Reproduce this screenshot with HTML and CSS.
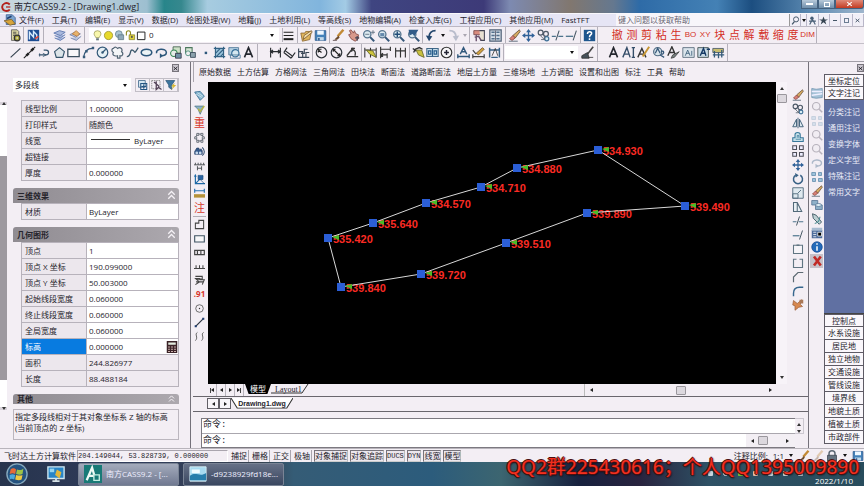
FILE: index.html
```html
<!DOCTYPE html>
<html lang="zh-CN">
<head>
<meta charset="utf-8">
<title>南方CASS9.2 - [Drawing1.dwg]</title>
<link rel="stylesheet" href="styles.css">
</head>
<body>
<svg class="sprite" aria-hidden="true">
  <symbol id="gear" viewBox="0 0 16 16"><path d="M3 1h7l2 2v11H3z" fill="#d9d4a0" stroke="#555"/><path d="M5 4h4M5 6h4M5 8h2" stroke="#444"/><circle cx="10" cy="11" r="3.5" fill="#a9a53a" stroke="#333" stroke-width="1.5"/><circle cx="10" cy="11" r="1" fill="#fff"/></symbol>
  <symbol id="cass" viewBox="0 0 16 16"><path d="M1 1h14v14H1z" fill="#1d4d92"/><path d="M3 13V4l5 6V3l4 4v6" fill="none" stroke="#d6ecff" stroke-width="1.7"/><path d="M10 12l4-3" stroke="#e24a3a" stroke-width="2"/></symbol>
  <symbol id="layers" viewBox="0 0 16 16"><path d="M1 5l7-3 7 2-6 4zM2 8l7 3 6-4M2 11l7 3 6-4" fill="#a9b9dd" stroke="#667eb4" stroke-width="1.2"/></symbol>
  <symbol id="layers2" viewBox="0 0 16 16"><path d="M1 7l6-3 7 2-6 4zM2 11l7 3 6-5" fill="#b9c4dd" stroke="#7180a7"/><path d="M4 6l5-4 4 4-3 3z" fill="#e7b36b" stroke="#b7773a"/></symbol>
  <symbol id="bulb" viewBox="0 0 16 16"><path d="M5.500 11C5 9 3 8 3 5.500a5 4.500 0 0 1 10 0C13 8 11 9 10.500 11z" fill="#f8f7ac" stroke="#908f4a"/><path d="M6 12h4v3H6z" fill="#69767c"/></symbol>
  <symbol id="sun" viewBox="0 0 16 16"><circle cx="8" cy="8" r="6" fill="#e7d92d" stroke="#8f8620"/></symbol>
  <symbol id="vpsun" viewBox="0 0 16 16"><circle cx="7" cy="6" r="5" fill="#a9c3d2" stroke="#557485"/><path d="M6 7h8v7H6z" fill="#8fa9b9" stroke="#54707e"/></symbol>
  <symbol id="lock" viewBox="0 0 16 16"><path d="M2 8V4a3 3 0 0 1 6 0v4" fill="none" stroke="#8f8b24" stroke-width="1.600"/><path d="M6 7h8v7H6z" fill="#ddd23c" stroke="#827b22"/><circle cx="10" cy="10" r="1.500" fill="#555"/></symbol>
  <symbol id="swatch" viewBox="0 0 16 16"><path d="M2 3h11v11H2z" fill="#fff" stroke="#222" stroke-width="1.400"/></symbol>
  <symbol id="weights" viewBox="0 0 16 16"><path d="M2 4h12M2 8h12" stroke="#222" stroke-width="1.500"/><path d="M2 12.500h12" stroke="#222" stroke-width="2.500"/></symbol>
  <symbol id="folder" viewBox="0 0 16 16"><path d="M1 5h5l1-2h7l-2 10-9 2z" fill="#e2b65e" stroke="#8a6630"/><path d="M4 13l1-5 9-6 1 2z" fill="#f4deae" stroke="#795b32"/></symbol>
  <symbol id="save" viewBox="0 0 16 16"><path d="M1.500 2h13v12h-13z" fill="#4381b9" stroke="#315d8f"/><path d="M4 2h8v5H4z" fill="#eef7ff"/><path d="M4 10h8v4H4z" fill="#c2d8e9"/><path d="M6 11v3" stroke="#315d8f" stroke-width="2"/></symbol>
  <symbol id="brush" viewBox="0 0 16 16"><path d="M14 1L7 9" stroke="#c28a35" stroke-width="3"/><path d="M8 8l-5 5c2 1 5 0 6-3z" fill="#6d4a2b"/><path d="M1 14h5" stroke="#544" /></symbol>
  <symbol id="hand" viewBox="0 0 16 16"><path d="M2 7l3-1-2-4 2-1 3 4 1-3 2 4 3 1v5l-4 3-5-3z" fill="#d9998b" stroke="#80443f"/><path d="M10 11h5M12.500 8.500v6" stroke="#445" stroke-width="1.500"/></symbol>
  <symbol id="zoom" viewBox="0 0 16 16"><circle cx="6.500" cy="6.500" r="4.500" fill="#dceaf1" stroke="#587690" stroke-width="1.600"/><path d="M10 10l5 5" stroke="#355779" stroke-width="2.500"/></symbol>
  <symbol id="zoompm" viewBox="0 0 16 16"><use href="#zoom"/><path d="M11 4h5M13.500 1.500v5M4 6.500h5" stroke="#567"/></symbol>
  <symbol id="zoomwin" viewBox="0 0 16 16"><use href="#zoom"/><path d="M4 5h5v4H4z" fill="#6388ab"/></symbol>
  <symbol id="zoomplus" viewBox="0 0 16 16"><use href="#zoom"/><path d="M3 6.500h7M6.500 3v7" stroke="#234d78" stroke-width="1.700"/></symbol>
  <symbol id="zoomprev" viewBox="0 0 16 16"><use href="#zoom"/><path d="M2 1h12l-5 8-2-3-4 2z" fill="#315b88"/></symbol>
  <symbol id="undo" viewBox="0 0 16 16"><path d="M13 2C8 2 5 5 5 10" fill="none" stroke="#24466d" stroke-width="2.200"/><path d="M1 8l8 1-4 6z" fill="#24466d"/></symbol>
  <symbol id="redo" viewBox="0 0 16 16"><path d="M3 2c5 0 8 3 8 8" fill="none" stroke="#b9bdcc" stroke-width="2.200"/><path d="M15 8l-8 1 4 6z" fill="#b9bdcc"/></symbol>
  <symbol id="props" viewBox="0 0 16 16"><path d="M1 2h9v5H1z" fill="#d98d80" stroke="#744"/><path d="M8 2h6v12h-5" fill="#e8e0d2" stroke="#445" stroke-width="1.300"/><path d="M4 7v8M2 10l5-1 3 5" stroke="#6a526d" stroke-width="1.700" fill="none"/></symbol>
  <symbol id="palette" viewBox="0 0 16 16"><path d="M1 1h14v14H1z" fill="#d6dfe8" stroke="#506277" stroke-width="1.500"/><path d="M3 4h4M9 4h4M3 8h4M9 8h4M3 12h4M9 12h4" stroke="#53708c" stroke-width="2"/><path d="M8 2v12" stroke="#556"/></symbol>
  <symbol id="eraser" viewBox="0 0 16 16"><path d="M14 1l-8 7 3 3 6-8z" fill="#d7aa60" stroke="#66513d"/><path d="M6 8l-4 4 3 2 4-3z" fill="#d88074" stroke="#844"/><path d="M1 15h11" stroke="#456"/></symbol>
  <symbol id="move" viewBox="0 0 16 16"><path d="M8 2v12M2 8h12" stroke="#316299" stroke-width="1.700"/><path d="M8 0l3 4H5zM8 16l3-4H5zM0 8l4-3v6zM16 8l-4-3v6z" fill="#316299"/></symbol>
  <symbol id="copy" viewBox="0 0 16 16"><circle cx="4.500" cy="4.500" r="3" fill="none" stroke="#4d5967" stroke-width="1.500"/><circle cx="11" cy="6" r="3" fill="none" stroke="#4d5967" stroke-width="1.500"/><circle cx="12" cy="12" r="2.500" fill="#d8edf4" stroke="#407198" stroke-width="1.500"/><path d="M4 8l5 5M5 13h4V9" fill="none" stroke="#4d5967"/></symbol>
  <symbol id="trim" viewBox="0 0 16 16"><path d="M1 9h5M9 9h6" stroke="#4d748c" stroke-width="1.600"/><path d="M10 2L6 14" stroke="#455663" stroke-width="1.300"/></symbol>
  <symbol id="extend" viewBox="0 0 16 16"><path d="M1 9h9" stroke="#4d748c" stroke-width="1.600"/><path d="M14 2l-4 12" stroke="#455663" stroke-width="1.300"/></symbol>
  <symbol id="help" viewBox="0 0 16 16"><path d="M1 1h14v14H1z" fill="#1e568e"/><path d="M5.500 6c0-4 6-3 5 0-.5 1.500-2.500 1.500-2.500 4M8 11.500v2" fill="none" stroke="#fff" stroke-width="1.900"/></symbol>
  <symbol id="line" viewBox="0 0 16 16"><path d="M2 14L14 3" stroke="#34414e" stroke-width="1.400"/></symbol>
  <symbol id="xline" viewBox="0 0 16 16"><path d="M1 15L15 1" stroke="#222" stroke-width="1.400"/><path d="M4 12l3-3M10 6l3-3" stroke="#222" stroke-width="3"/></symbol>
  <symbol id="pline" viewBox="0 0 16 16"><path d="M1 11h9a3 3 0 0 0 0-6H7" fill="none" stroke="#35536d" stroke-width="1.500"/><path d="M2 9v4M6 9l4 2-4 2" stroke="#35536d" fill="none"/></symbol>
  <symbol id="pentagon" viewBox="0 0 16 16"><path d="M8 2l6 5-2 7H4L2 7z" fill="#dce4e8" stroke="#34536b" stroke-width="1.400"/></symbol>
  <symbol id="rect" viewBox="0 0 16 16"><path d="M1 4h14v9H1z" fill="#f8f7f9" stroke="#3c5060" stroke-width="1.600"/></symbol>
  <symbol id="arc" viewBox="0 0 16 16"><path d="M2 14C3 7 7 3 13 3" fill="none" stroke="#355a79" stroke-width="1.600"/><path d="M1 12h3v3H1zM12 1h3v3h-3zM4 5h3v3H4z" fill="#355a79"/></symbol>
  <symbol id="circle" viewBox="0 0 16 16"><circle cx="8" cy="8" r="6.500" fill="#e7f0f5" stroke="#355a79" stroke-width="1.500"/><path d="M8 8l4-4" stroke="#355a79" stroke-width="1.600"/><circle cx="8" cy="8" r="1.500" fill="#355a79"/></symbol>
  <symbol id="cloud" viewBox="0 0 16 16"><path d="M3 3c2-3 4-1 5 0 3-2 7 0 5 4 3 2 1 6-2 5v3H8v-3c-4 1-7-1-5-4C0 6 1 3 3 3z" fill="#f4f5f7" stroke="#536474" stroke-width="1.500"/></symbol>
  <symbol id="spline" viewBox="0 0 16 16"><path d="M1 13C7 13 4 4 8 5s1 7 7-3" fill="none" stroke="#3e596d" stroke-width="1.600"/></symbol>
  <symbol id="ellipse" viewBox="0 0 16 16"><ellipse cx="8" cy="8" rx="6.500" ry="4" fill="#eef4f6" stroke="#2d577b" stroke-width="1.900"/></symbol>
  <symbol id="ellarc" viewBox="0 0 16 16"><path d="M2 9c-2-6 12-7 12-1 0 3-3 4-6 4" fill="none" stroke="#2d577b" stroke-width="1.900"/><path d="M6 9v6l4-3z" fill="#2d577b"/></symbol>
  <symbol id="insert" viewBox="0 0 16 16"><path d="M5 1h9v8H5z" fill="#cee1c7" stroke="#3c5c48"/><circle cx="6" cy="9" r="4" fill="#e6ede8" stroke="#385" stroke-width="1.300"/><path d="M8 9h7v6H8z" fill="#6f90a5" stroke="#334"/></symbol>
  <symbol id="block" viewBox="0 0 16 16"><path d="M2 2h8v7H2z" fill="#d7e6d5" stroke="#4c775d" stroke-width="1.300"/><circle cx="5" cy="9" r="3" fill="#eee" stroke="#487"/><path d="M8 8h6v6H8z" fill="#8ba1ac" stroke="#345"/></symbol>
  <symbol id="dot" viewBox="0 0 16 16"><path d="M7 7h3v3H7z" fill="#2d577b"/></symbol>
  <symbol id="hatch" viewBox="0 0 16 16"><path d="M3 3h10v10H3z" fill="#9bc4dc"/><path d="M1 3h14M1 13h14M3 1v14M13 1v14M3 9l6-6M4 13l9-9M9 13l4-4" stroke="#336284" stroke-width="1.400"/></symbol>
  <symbol id="region" viewBox="0 0 16 16"><path d="M1 2h12v9H1z" fill="#b4d0e1" stroke="#477392"/><circle cx="9" cy="9" r="4.500" fill="#d4e7f0" stroke="#387099" stroke-width="1.500"/><path d="M3 11h12v4H3z" fill="none" stroke="#477392"/></symbol>
  <symbol id="dimlin" viewBox="0 0 16 16"><path d="M2 2v12M14 2v12M2 7h12M5 5L2 7l3 2M11 5l3 2-3 2" stroke="#292c30" stroke-width="1.400" fill="none"/></symbol>
  <symbol id="dimali" viewBox="0 0 16 16"><path d="M1 8l9 7M5 2l-4 6M15 8l-5 7M3 6l8 6" stroke="#292c30" stroke-width="1.500"/></symbol>
  <symbol id="dimord" viewBox="0 0 16 16"><path d="M2 3v11h13M5 9h4V4h4M11 14V8h4M2 7h5v7" stroke="#394656" stroke-width="1.400" fill="none"/></symbol>
  <symbol id="radius" viewBox="0 0 16 16"><circle cx="8" cy="8" r="6.500" fill="none" stroke="#30353c" stroke-width="1.500"/><path d="M8 8L3 4M4 8V4h4" stroke="#222" fill="none" stroke-width="1.400"/></symbol>
  <symbol id="diam" viewBox="0 0 16 16"><circle cx="8" cy="8" r="6.500" fill="none" stroke="#30353c" stroke-width="1.500"/><path d="M4 4l8 8M4 7V4h3M12 9v3H9" stroke="#222" fill="none" stroke-width="1.400"/></symbol>
  <symbol id="angle" viewBox="0 0 16 16"><path d="M1 12L9 2M1 13h14M7 4c5 1 5 5 4 8M7 7V3h4" stroke="#333" fill="none" stroke-width="1.600"/></symbol>
  <symbol id="qdim" viewBox="0 0 16 16"><path d="M1 2v12M8 2v12M15 2v12M1 5h14" stroke="#333" stroke-width="1.300"/><path d="M3 5l8 1 4 8-8-4z" fill="#cfc53e" stroke="#606022"/></symbol>
  <symbol id="dimbase" viewBox="0 0 16 16"><path d="M2 1v14M14 1v5M2 4h12M10 9v6M2 11h8M5 9l-3 2 3 2" stroke="#333" stroke-width="1.400" fill="none"/></symbol>
  <symbol id="dimcont" viewBox="0 0 16 16"><path d="M2 2v12M8 2v12M14 2v12M2 6h12" stroke="#333" stroke-width="1.400"/></symbol>
  <symbol id="qlead" viewBox="0 0 16 16"><path d="M1 3l4 3M2 8l2-4 5-2 4 2" fill="none" stroke="#333" stroke-width="1.700"/><path d="M5 5l7 0 3 9-7-3z" fill="#c9c13e" stroke="#62612a"/></symbol>
  <symbol id="tol" viewBox="0 0 16 16"><path d="M1 3h14v10H1z" fill="#c7ddeb" stroke="#426887" stroke-width="1.300"/><path d="M8 3v10M3 6h3v4H3zM10 6h3v4h-3z" stroke="#285c8b" fill="none" stroke-width="1.400"/></symbol>
  <symbol id="center" viewBox="0 0 16 16"><circle cx="8" cy="8" r="6.500" fill="#f7f5f8" stroke="#333" stroke-width="1.400"/><path d="M8 5v6M5 8h6" stroke="#223" stroke-width="1.800"/></symbol>
  <symbol id="dimtext" viewBox="0 0 16 16"><path d="M4 10l4-8 4 8M5 7h6M1 10v5M15 10v5M1 13h14" fill="none" stroke="#31587c" stroke-width="1.700"/></symbol>
  <symbol id="dimedit" viewBox="0 0 16 16"><path d="M5 9l8-7 2 2-7 7z" fill="#d0a03c" stroke="#6d522d"/><path d="M1 5l4 5M1 10v5M15 10v5M1 13h14" stroke="#444" stroke-width="1.500"/></symbol>
  <symbol id="dimupd" viewBox="0 0 16 16"><path d="M2 2v12M14 2v12M2 5h12M4 14h8" stroke="#365f83" stroke-width="1.800"/><path d="M5 12L9 3l3 9" fill="none" stroke="#333"/></symbol>
  <symbol id="dimstyle" viewBox="0 0 16 16"><path d="M15 1L8 10" stroke="#444" stroke-width="2"/><path d="M8 8l-7 4v3h9zM9 14h6" fill="#47525a" stroke="#333"/></symbol>
  <symbol id="textA" viewBox="0 0 16 16"><path d="M3 14L8 2l5 12M5 10h6" fill="none" stroke="#25282f" stroke-width="2"/></symbol>
  <symbol id="textI" viewBox="0 0 16 16"><path d="M1 14L6 2l4 12M3 10h6M12 2h4M12 14h4M14 2v12" fill="none" stroke="#344d68" stroke-width="1.700"/></symbol>
  <symbol id="textedit" viewBox="0 0 16 16"><path d="M1 14L6 3l5 11M3 10h6" fill="none" stroke="#333" stroke-width="1.700"/><path d="M15 1L7 13" stroke="#c69531" stroke-width="2.400"/></symbol>
  <symbol id="find" viewBox="0 0 16 16"><circle cx="7" cy="7" r="5" fill="#d9e4eb" stroke="#536d84" stroke-width="1.500"/><path d="M10 11l5 3M4 9l3-6 3 6M11 7c4-3 5 4 0 3" stroke="#365879" stroke-width="1.500" fill="none"/></symbol>
  <symbol id="textsty" viewBox="0 0 16 16"><path d="M1 12L6 1l4 9M3 8h6" stroke="#333" stroke-width="1.700" fill="none"/><path d="M15 7l-6 7-4 1 2-4z" fill="#76807f" stroke="#444"/></symbol>
  <symbol id="boxAI" viewBox="0 0 16 16"><path d="M1 2h14v12H1z" fill="#dae4eb" stroke="#4f6274"/><path d="M4 12l3-7 3 7M5 9h4M12 6v6" fill="none" stroke="#385a75"/></symbol>
  <symbol id="boxA" viewBox="0 0 16 16"><path d="M1 2h13v12H1z" fill="#cadbe5" stroke="#344"/><path d="M4 12l4-9 3 9M5 9h5M12 4h4" fill="none" stroke="#163a65" stroke-width="1.700"/></symbol>
  <symbol id="dimscale" viewBox="0 0 16 16"><path d="M1 3h13v5H1z" fill="#c7bd70" stroke="#456"/><path d="M3 6v8M12 5v9M1 11h14M8 8v7" stroke="#345b7a" stroke-width="1.600"/></symbol>
  <symbol id="tag" viewBox="0 0 16 16"><path d="M1 3l8-1 6 7-6 6z" fill="#86b5cf" stroke="#3d7195" stroke-width="1.300"/><path d="M3 6l9 5M5 4l8 5" stroke="#e4f0f5"/></symbol>
  <symbol id="tagedit" viewBox="0 0 16 16"><path d="M1 3h13L9 15 6 8z" fill="#8db3c4" stroke="#486f84"/><path d="M15 3l-6 8-3-4" fill="none" stroke="#b5b348" stroke-width="2.200"/></symbol>
  <symbol id="nodes" viewBox="0 0 16 16"><path d="M5 3h6l3 5-3 5H5L2 8z" fill="none" stroke="#606872" stroke-width="1.200"/><path d="M4 2h3v3H4zM10 2h3v3h-3zM1 7h3v3H1zM12 7h3v3h-3zM4 12h3v3H4zM10 12h3v3h-3z" fill="#eceaf0" stroke="#434b56"/></symbol>
  <symbol id="binoc" viewBox="0 0 16 16"><path d="M1 12V8l3-5h3l1 3 2-2 2 3v5z" fill="#35598b" stroke="#263f65"/><circle cx="4" cy="10" r="2" fill="#c7d9eb"/><circle cx="9" cy="10" r="2" fill="#c7d9eb"/><path d="M12 2c4 4 4 9 0 12" stroke="#334e72" fill="none" stroke-width="1.500"/></symbol>
  <symbol id="fence" viewBox="0 0 16 16"><path d="M0 7h16M2 4v3M6 4v3M10 4v3M14 4v3M5 9v6M11 9v6M5 12h6" stroke="#4d5054" stroke-width="1.400"/></symbol>
  <symbol id="axes" viewBox="0 0 16 16"><path d="M2 15V1M2 14h14M2 14L13 3" stroke="#1d69a6" stroke-width="1.700"/><path d="M6 2h7v6H6zM9 8l6 6" fill="#2a63a3" stroke="#184b7b"/><path d="M0 4l2-4 2 4z" fill="#1d69a6"/></symbol>
  <symbol id="ruler" viewBox="0 0 16 16"><path d="M1 4h14M1 1v6M15 1v6" stroke="#2771b2" stroke-width="1.700"/><path d="M0 9h16v5H0z" fill="#b49139"/></symbol>
  <symbol id="poly" viewBox="0 0 16 16"><path d="M2 14V6h5V2h7v12z" fill="none" stroke="#444" stroke-width="1.500"/></symbol>
  <symbol id="bars" viewBox="0 0 16 16"><path d="M1 5h14v6H1zM5 5v6M10 5v6" fill="none" stroke="#444" stroke-width="1.700"/></symbol>
  <symbol id="comb" viewBox="0 0 16 16"><path d="M0 11h16M3 11V6M8 11V6M13 11V6" stroke="#444" stroke-width="1.500"/></symbol>
  <symbol id="slope" viewBox="0 0 16 16"><path d="M2 2h10v4H3l5 4-6 4M8 7h7l-3 7M1 5h8M3 10h11" fill="none" stroke="#444" stroke-width="1.500"/></symbol>
  <symbol id="point" viewBox="0 0 16 16"><circle cx="8" cy="8" r="5.500" fill="none" stroke="#555" stroke-width="1.200"/><circle cx="8" cy="8" r="1" fill="#333"/></symbol>
  <symbol id="segment" viewBox="0 0 16 16"><path d="M2 14L14 2" stroke="#2b3440" stroke-width="1.700"/><path d="M1 12h3v3H1zM12 1h3v3h-3z" fill="#1e3c70"/></symbol>
  <symbol id="waves" viewBox="0 0 16 16"><path d="M5 2C0 5 7 9 2 14M14 2c-5 3 2 7-3 12" fill="none" stroke="#555" stroke-width="1.300"/></symbol>
  <symbol id="mirror" viewBox="0 0 16 16"><path d="M6 3v10H1zM10 3v10h5zM8 1v14" fill="#dce8ef" stroke="#45647c" stroke-width="1.300"/></symbol>
  <symbol id="offset" viewBox="0 0 16 16"><path d="M1 14V9h3V5c0-4 7-4 7 0v4h4v5z" fill="#c5dfe8" stroke="#37779a" stroke-width="1.400"/><path d="M5 11h7M7 9V6h2v3" fill="none" stroke="#37779a"/></symbol>
  <symbol id="array" viewBox="0 0 16 16"><path d="M1 1h5v5H1zM10 1h5v5h-5zM1 10h5v5H1zM10 10h5v5h-5z" fill="#eef" stroke="#4d4e58" stroke-width="1.400"/></symbol>
  <symbol id="rotate" viewBox="0 0 16 16"><path d="M11 3a6 6 0 1 1-6 0" fill="none" stroke="#3a6286" stroke-width="2"/><path d="M4 0l5 3-4 3z" fill="#3a6286"/></symbol>
  <symbol id="scale" viewBox="0 0 16 16"><path d="M1 1h14v14H1zM1 9h7v6H1zM8 8l4-4" fill="#dfe9ef" stroke="#5c7385" stroke-width="1.300"/></symbol>
  <symbol id="stretch" viewBox="0 0 16 16"><path d="M2 2h5l6 12H2zM7 2v12" fill="#eaf0f4" stroke="#526979" stroke-width="1.400"/></symbol>
  <symbol id="breakpt" viewBox="0 0 16 16"><path d="M2 3h12v11H2z" fill="#f6f4f8" stroke="#607582" stroke-width="1.400"/><path d="M6 2h4v2H6z" fill="#607582"/></symbol>
  <symbol id="break" viewBox="0 0 16 16"><path d="M6 3H2v11h12V3h-4" fill="none" stroke="#607582" stroke-width="1.500"/></symbol>
  <symbol id="chamfer" viewBox="0 0 16 16"><path d="M2 15V8l6-6h7" fill="none" stroke="#5c6972" stroke-width="1.600"/></symbol>
  <symbol id="fillet" viewBox="0 0 16 16"><path d="M2 15V11c0-5 3-8 8-8h5" fill="none" stroke="#35668d" stroke-width="1.900"/></symbol>
  <symbol id="explode" viewBox="0 0 16 16"><path d="M2 2l5 4 6-5-2 6 3 3-5 1-5 4V9L1 8z" fill="#d88950" stroke="#9b603d"/><path d="M10 1h5v5h-5z" fill="#a87756"/></symbol>
  <symbol id="zoomgray" viewBox="0 0 16 16"><circle cx="7" cy="7" r="5" fill="#f1edf3" stroke="#b7b2bc" stroke-width="1.600"/><path d="M11 11l4 4" stroke="#b7b2bc" stroke-width="2"/></symbol>
  <symbol id="maps" viewBox="0 0 16 16"><path d="M1 2l6 1 8-1v12l-8 1-6-1z" fill="#a5c2d7" stroke="#6c91ae"/><path d="M1 6h14M1 11l14-2" stroke="#eef" stroke-width="2"/></symbol>
  <symbol id="four" viewBox="0 0 16 16"><path d="M1 2h5v4H1zM10 2h4v4h-4zM2 10h4v4H2zM10 10h5v4h-5z" fill="#9dc2dc" stroke="#5d88a8"/></symbol>
  <symbol id="db" viewBox="0 0 16 16"><path d="M1 2h8v6H1zM6 8h9v6H6z" fill="#8eb0c8" stroke="#506f8f"/><ellipse cx="10" cy="8" rx="4" ry="2" fill="#deeef5" stroke="#507090"/></symbol>
  <symbol id="tool" viewBox="0 0 16 16"><path d="M2 1l5 2 7 9-3 3-8-8z" fill="#bdd0d3" stroke="#48616c" stroke-width="1.300"/><path d="M5 14c5-1 6-4 7-9" fill="none" stroke="#498c91" stroke-width="1.400"/></symbol>
  <symbol id="panel" viewBox="0 0 16 16"><path d="M1 4h14v11H1z" fill="#4d6c9b"/><path d="M1 1h14v4H1z" fill="#a8bbd0"/><path d="M3 7h4M3 10h4M3 13h4M9 7h5v5H9z" stroke="#fff"/></symbol>
  <symbol id="info" viewBox="0 0 16 16"><circle cx="8" cy="8" r="7" fill="#246ab9" stroke="#134a93"/><path d="M8 3v2M8 7v6" stroke="#fff" stroke-width="2"/></symbol>
  <symbol id="redx" viewBox="0 0 16 16"><path d="M4 2l9 12M13 2L4 14" stroke="#c12a26" stroke-width="3.500"/></symbol>
  <symbol id="pick" viewBox="0 0 16 16"><path d="M2 2h9v9H2z" fill="#d4e5f1" stroke="#345d83"/><path d="M5 6h8v8H5zM6 10h6M9 7v6" fill="none" stroke="#245482" stroke-width="1.400"/></symbol>
  <symbol id="select" viewBox="0 0 16 16"><path d="M1 2h11v11H1z" fill="none" stroke="#777" stroke-dasharray="2 1"/><path d="M7 3v11l3-3 4 3M4 4l7 6" stroke="#534157" fill="none" stroke-width="1.700"/></symbol>
  <symbol id="filter" viewBox="0 0 16 16"><path d="M1 2h12L9 8v6l-4-3V8z" fill="#3d759e" stroke="#315b79"/><path d="M13 5l-5 5h3l-3 5 7-7h-3z" fill="#d7b92f"/></symbol>
  <symbol id="calc" viewBox="0 0 16 16"><path d="M1 0h14v16H1z" fill="#3c2428"/><path d="M3 2h10v3H3z" fill="#e5eee0"/><path d="M3 8h2M7 8h2M11 8h2M3 11h2M7 11h2M11 11h2M3 14h2M7 14h2M11 14h2" stroke="#f6dbd4" stroke-width="1.500"/></symbol>
  <symbol id="chevrons" viewBox="0 0 16 16"><path d="M4 7l4-4 4 4M4 12l4-4 4 4" fill="none" stroke="#f4f1f5" stroke-width="1.600"/></symbol>
  <symbol id="appc" viewBox="0 0 16 16"><path d="M14 4C9-1 1 3 2 9c1 6 9 7 12 3" fill="none" stroke="#b3201c" stroke-width="3"/><path d="M8 8h7" stroke="#b3201c" stroke-width="2"/></symbol>
  <symbol id="drawing" viewBox="0 0 16 16"><path d="M3 1h8l4 4v9H3z" fill="#7aa3cf" stroke="#355b8c"/><path d="M0 9l10-2 5 6-7 2z" fill="#d6a43b" stroke="#765b29"/><path d="M4 6l6-3" stroke="#223f70" stroke-width="2"/></symbol>
  <symbol id="star" viewBox="0 0 16 16"><path d="M8 1l2 5h6l-5 3 2 6-5-4-5 4 2-6-5-3h6z" fill="#364552"/></symbol>
  <symbol id="comm" viewBox="0 0 16 16"><circle cx="7" cy="4" r="3" fill="#485f77"/><path d="M3 15l5-9 5 9M2 9h12" fill="none" stroke="#485f77" stroke-width="2"/></symbol>
  <symbol id="magnify" viewBox="0 0 16 16"><circle cx="9" cy="6" r="4.500" fill="none" stroke="#415467" stroke-width="1.700"/><path d="M6 10l-4 5" stroke="#415467" stroke-width="2.200"/></symbol>
  <symbol id="cross" viewBox="0 0 16 16"><path d="M2 3l12 10M14 3L2 13" stroke="currentColor" stroke-width="3"/></symbol>
  <symbol id="padlock" viewBox="0 0 16 16"><path d="M4 8V5a4 4 0 0 1 8 0v3" fill="none" stroke="#5d6874" stroke-width="2"/><path d="M2 7h12v8H2z" fill="#64727f" stroke="#38424e"/></symbol>
  <symbol id="orb" viewBox="0 0 24 24"><circle cx="12" cy="12" r="11" fill="#24527f" stroke="#87aabe" stroke-width="1.500"/><path d="M5 7c3-2 4-1 6 0l-1 5c-2-1-4-1-6 0z" fill="#e66b38"/><path d="M12 7c3 1 5 1 7-1l-1 6c-2 1-4 1-7 0z" fill="#9dc347"/><path d="M4 13c2-1 4-1 6 0l-1 5c-2-1-4-1-5 0z" fill="#4ba9dc"/><path d="M11 13c3 1 5 1 7 0l-1 5c-2 1-4 1-7 0z" fill="#f0c941"/></symbol>
  <symbol id="desktop" viewBox="0 0 20 20"><path d="M1 2h18v13H1z" fill="#2885c7" stroke="#d1e8f1" stroke-width="1.500"/><path d="M6 18h8M10 15v3" stroke="#d6e2e6" stroke-width="2"/><path d="M11 5l5 3-2 7-5-4z" fill="#e2b73c"/><path d="M3 4h5v4H3z" fill="#94d5f1"/></symbol>
  <symbol id="acad" viewBox="0 0 20 20"><path d="M0 0h20v20H0z" fill="#187a77"/><path d="M3 17L9 3l4 14M5 12h7" fill="none" stroke="#eefaf5" stroke-width="2.500"/><path d="M11 11h6v6h-6z" fill="#187a77" stroke="#c4eee2" stroke-width="1.500"/></symbol>
  <symbol id="photo" viewBox="0 0 20 20"><path d="M1 2h18v16H1z" fill="#a7daf0" stroke="#d8edf4"/><path d="M1 12c7-5 11 2 18-3v8H1z" fill="#287eac"/><path d="M3 5h9v4H3z" fill="#f0fbff"/></symbol>
</svg>

<header class="titlebar">
  <svg class="i10" aria-hidden="true"><use href="#appc"/></svg>
  <h1>南方CASS9.2 - [Drawing1.dwg]</h1>
  <div class="winbtns"><button aria-label="最小化"><span class="g-min"></span></button><button aria-label="还原"><span class="g-max"></span></button><button class="close" aria-label="关闭"><svg><use href="#cross"/></svg></button></div>
</header>

<nav class="menubar" aria-label="主菜单">
  <svg class="i12" aria-hidden="true"><use href="#drawing"/></svg>
  <div class="menus"><button>文件(F)</button><button>工具(T)</button><button>编辑(E)</button><button>显示(V)</button><button>数据(D)</button><button>绘图处理(W)</button><button>地籍(J)</button><button>土地利用(L)</button><button>等高线(S)</button><button>地物编辑(A)</button><button>检查入库(G)</button><button>工程应用(C)</button><button>其他应用(M)</button><button>FastTFT</button></div>
  <input class="search" type="text" aria-label="搜索" placeholder="键入问题以获取帮助">
  <div class="menuright"><button aria-label="搜索帮助"><svg><use href="#magnify"/></svg></button><button class="caret" aria-label="搜索选项"></button><button aria-label="通讯中心"><svg><use href="#comm"/></svg></button><button aria-label="收藏夹"><svg><use href="#star"/></svg></button><button aria-label="最小化文档"><span class="m-min"></span></button><button aria-label="还原文档"><span class="m-max"></span></button><button aria-label="关闭文档"><svg class="i6"><use href="#cross"/></svg></button></div>
</nav>

<div class="toolbar tb1">
  <div class="group"><button aria-label="工作空间"><svg><use href="#gear"/></svg></button></div>
  <div class="group"><button aria-label="CASS"><svg><use href="#cass"/></svg></button></div>
  <div class="group pl8"><button aria-label="图层特性"><svg><use href="#layers"/></svg></button><button aria-label="置为当前"><svg><use href="#layers2"/></svg></button></div>
  <div class="group layerbox">
    <svg><use href="#bulb"/></svg><svg><use href="#sun"/></svg><svg><use href="#vpsun"/></svg><svg><use href="#lock"/></svg><svg><use href="#swatch"/></svg>
    <select aria-label="图层"><option>0</option></select>
  </div>
  <div class="group"><button aria-label="线宽设置"><svg><use href="#weights"/></svg></button></div>
  <div class="group"><button aria-label="打开"><svg><use href="#folder"/></svg></button><button aria-label="保存"><svg><use href="#save"/></svg></button></div>
  <div class="group"><button aria-label="特性匹配"><svg><use href="#brush"/></svg></button><button aria-label="平移"><svg><use href="#hand"/></svg></button><button aria-label="实时缩放"><svg><use href="#zoompm"/></svg></button><button aria-label="窗口缩放"><svg><use href="#zoomwin"/></svg></button><button aria-label="范围缩放"><svg><use href="#zoomplus"/></svg></button><button aria-label="缩放上一个"><svg><use href="#zoomprev"/></svg></button></div>
  <div class="group"><button aria-label="放弃"><svg><use href="#undo"/></svg></button><button class="caret" aria-label="放弃列表"></button><button aria-label="重做"><svg><use href="#redo"/></svg></button><button class="caret dim" aria-label="重做列表"></button></div>
  <div class="group"><button aria-label="特性"><svg><use href="#props"/></svg></button><button aria-label="工具选项板"><svg><use href="#palette"/></svg></button></div>
  <div class="group"><button aria-label="删除"><svg><use href="#eraser"/></svg></button><button aria-label="移动"><svg><use href="#move"/></svg></button><button aria-label="复制"><svg><use href="#copy"/></svg></button><button aria-label="修剪"><svg><use href="#trim"/></svg></button><button aria-label="延伸"><svg><use href="#extend"/></svg></button></div>
  <div class="group"><button aria-label="帮助"><svg><use href="#help"/></svg></button></div>
  <div class="group redtext"><button>撤</button><button>测</button><button>剪</button><button>粘</button><button>生</button><button class="nar">BO</button><button class="nar">XY</button><button>块</button><button>点</button><button>解</button><button>载</button><button>缩</button><button>度</button><button class="nar">DIM</button></div>
</div>

<div class="toolbar tb2">
  <div class="group"><button aria-label="直线"><svg><use href="#line"/></svg></button><button aria-label="构造线"><svg><use href="#xline"/></svg></button><button aria-label="多段线"><svg><use href="#pline"/></svg></button><button aria-label="正多边形"><svg><use href="#pentagon"/></svg></button><button aria-label="矩形"><svg><use href="#rect"/></svg></button><button aria-label="圆弧"><svg><use href="#arc"/></svg></button><button aria-label="圆"><svg><use href="#circle"/></svg></button><button aria-label="云线"><svg><use href="#cloud"/></svg></button><button aria-label="样条曲线"><svg><use href="#spline"/></svg></button><button aria-label="椭圆"><svg><use href="#ellipse"/></svg></button><button aria-label="椭圆弧"><svg><use href="#ellarc"/></svg></button><button aria-label="插入块"><svg><use href="#insert"/></svg></button><button aria-label="创建块"><svg><use href="#block"/></svg></button><button aria-label="点"><svg><use href="#dot"/></svg></button><button aria-label="图案填充"><svg><use href="#hatch"/></svg></button><button aria-label="面域"><svg><use href="#region"/></svg></button><button aria-label="多行文字"><svg><use href="#textA"/></svg></button></div>
  <div class="group pl10"><button aria-label="线性标注"><svg><use href="#dimlin"/></svg></button><button aria-label="对齐标注"><svg><use href="#dimali"/></svg></button><button aria-label="坐标标注"><svg><use href="#dimord"/></svg></button></div>
  <div class="group"><button aria-label="半径"><svg><use href="#radius"/></svg></button><button aria-label="直径"><svg><use href="#diam"/></svg></button><button aria-label="角度"><svg><use href="#angle"/></svg></button></div>
  <div class="group"><button aria-label="快速标注"><svg><use href="#qdim"/></svg></button><button aria-label="基线"><svg><use href="#dimbase"/></svg></button><button aria-label="连续"><svg><use href="#dimcont"/></svg></button></div>
  <div class="group"><button aria-label="快速引线"><svg><use href="#qlead"/></svg></button><button aria-label="公差"><svg><use href="#tol"/></svg></button><button aria-label="圆心标记"><svg><use href="#center"/></svg></button></div>
  <div class="group"><button aria-label="编辑标注"><svg><use href="#dimtext"/></svg></button><button aria-label="编辑标注文字"><svg><use href="#dimedit"/></svg></button><button aria-label="标注更新"><svg><use href="#dimupd"/></svg></button></div>
  <div class="group dimsel"><span class="pick"><select aria-label="标注样式"><option></option></select></span><button aria-label="标注样式管理"><svg><use href="#dimstyle"/></svg></button></div>
  <div class="group pl8"><button aria-label="文字"><svg><use href="#textA"/></svg></button><button aria-label="单行文字"><svg><use href="#textI"/></svg></button><button aria-label="编辑文字"><svg><use href="#textedit"/></svg></button><button aria-label="查找"><svg><use href="#find"/></svg></button><button aria-label="文字样式"><svg><use href="#textsty"/></svg></button><button aria-label="缩放文字"><svg><use href="#boxAI"/></svg></button><button aria-label="对正文字"><svg><use href="#boxA"/></svg></button><button aria-label="空间转换"><svg><use href="#dimscale"/></svg></button></div>
</div>

<main class="main">
  <aside class="props">
    <div class="scroller" aria-hidden="true"><span class="tri up"></span><span class="track"></span><span class="thumb"></span><span class="track end"></span><span class="tri down"></span></div>
    <div class="panel">
      <button class="x" aria-label="关闭特性"><svg class="i6"><use href="#cross"/></svg></button>
      <div class="objrow"><span class="pick"><select aria-label="对象类型"><option>多段线</option></select></span><div class="objbtns"><button aria-label="切换 PICKADD"><svg><use href="#pick"/></svg></button><button aria-label="选择对象"><svg><use href="#select"/></svg></button><button aria-label="快速选择"><svg><use href="#filter"/></svg></button></div></div>
      <table>
        <tr><th>线型比例</th><td>1.000000</td></tr>
        <tr class="ro"><th>打印样式</th><td>随颜色</td></tr>
        <tr><th>线宽</th><td><span class="lw"></span>ByLayer</td></tr>
        <tr><th>超链接</th><td></td></tr>
        <tr><th>厚度</th><td>0.000000</td></tr>
      </table>
      <h2>三维效果<svg><use href="#chevrons"/></svg></h2>
      <table><tr><th>材质</th><td>ByLayer</td></tr></table>
      <h2>几何图形<svg><use href="#chevrons"/></svg></h2>
      <table>
        <tr><th>顶点</th><td>1</td></tr>
        <tr><th>顶点 X 坐标</th><td>190.099000</td></tr>
        <tr><th>顶点 Y 坐标</th><td>50.003000</td></tr>
        <tr><th>起始线段宽度</th><td>0.060000</td></tr>
        <tr><th>终止线段宽度</th><td>0.060000</td></tr>
        <tr><th>全局宽度</th><td>0.060000</td></tr>
        <tr class="sel"><th><label for="elev">标高</label></th><td><div class="edit"><input id="elev" type="text" value="0.000000"><button aria-label="快速计算器"><svg><use href="#calc"/></svg></button></div></td></tr>
        <tr class="ro"><th>面积</th><td>244.826977</td></tr>
        <tr class="ro"><th>长度</th><td>88.488184</td></tr>
      </table>
      <h2 class="cut">其他<svg><use href="#chevrons"/></svg></h2>
      <p class="desc">指定多段线相对于其对象坐标系 Z 轴的标高 (当前顶点的 Z 坐标)</p>
    </div>
  </aside>

  <section class="work">
    <div class="tft"><button>原始数据</button><button>土方估算</button><button>方格网法</button><button>三角网法</button><button>田块法</button><button>断面法</button><button>道路断面法</button><button>地层土方量</button><button>三维场地</button><button>土方调配</button><button>设置和出图</button><button>标注</button><button>工具</button><button>帮助</button></div>
    <div class="middle">
      <div class="vbar left"><button aria-label="查看编码"><svg><use href="#tag"/></svg></button><button aria-label="加入编码"><svg><use href="#tagedit"/></svg></button><button class="red">重</button><button aria-label="多边形"><svg><use href="#nodes"/></svg></button><button aria-label="查找图元"><svg><use href="#binoc"/></svg></button><button aria-label="陡坎"><svg><use href="#fence"/></svg></button><button aria-label="坐标"><svg><use href="#axes"/></svg></button><button aria-label="距离"><svg><use href="#ruler"/></svg></button><button class="red last">注</button><button aria-label="房屋"><svg><use href="#poly"/></svg></button><button aria-label="四点房屋"><svg><use href="#rect"/></svg></button><button aria-label="依比例围墙"><svg><use href="#bars"/></svg></button><button aria-label="坎线"><svg><use href="#comb"/></svg></button><button aria-label="斜坡"><svg><use href="#slope"/></svg></button><button class="red small">.91</button><button aria-label="控制点"><svg><use href="#point"/></svg></button><button aria-label="画线"><svg><use href="#segment"/></svg></button><button aria-label="水系"><svg><use href="#waves"/></svg></button></div>
      <div class="view">
        <svg class="canvas" role="img" aria-label="多段线高程图">
          <g class="elev"><text x="395" y="73">534.930</text><text x="482" y="129">539.490</text><text x="384" y="136">539.890</text><text x="303" y="166">539.510</text><text x="218" y="197">539.720</text><text x="138" y="210">539.840</text><text x="125" y="161">535.420</text><text x="170" y="146">535.640</text><text x="223" y="126">534.570</text><text x="278" y="110">534.710</text><text x="314" y="91">534.880</text></g>
          <path class="pl" d="M390 68L477 124L379 131L298 161L213 192L133 205L120 156L165 141L218 121L273 105L309 86Z"/>
          <g class="green"><path d="M394 67l7-2v5zM481 123l7-2v5zM383 130l7-2v5zM302 160l7-2v5zM217 191l7-2v5zM137 204l7-2v5zM124 155l7-2v5zM169 140l7-2v5zM222 120l7-2v5zM277 104l7-2v5zM313 85l7-2v5z"/></g>
          <path class="grips" d="M386 64h8v8h-8zM473 120h8v8h-8zM375 127h8v8h-8zM294 157h8v8h-8zM209 188h8v8h-8zM129 201h8v8h-8zM116 152h8v8h-8zM161 137h8v8h-8zM214 117h8v8h-8zM269 101h8v8h-8zM305 82h8v8h-8z"/>
        </svg>
        <div class="vscroll" aria-hidden="true"><span class="tri up"></span><span class="knob"></span><span class="tri down"></span></div>
        <div class="layouts"><span class="nav"><button aria-label="第一个"><i class="bar"></i><i class="tri lt"></i></button><button aria-label="上一个"><i class="tri lt"></i></button><button aria-label="下一个"><i class="tri rt"></i></button><button aria-label="最后一个"><i class="tri rt"></i><i class="bar"></i></button></span><button class="tab on">模型</button><button class="tab sheet"><svg viewBox="0 0 38 10" preserveAspectRatio="none" aria-hidden="true"><path d="M0 9h31l6-9"/></svg><span>Layout1</span></button><span class="hscroll" aria-hidden="true"><span class="tri lt"></span><span class="knob"></span><span class="tri rt"></span></span></div>
      </div>
      <div class="vbar right"><button aria-label="删除"><svg><use href="#eraser"/></svg></button><button aria-label="复制"><svg><use href="#copy"/></svg></button><button aria-label="镜像"><svg><use href="#mirror"/></svg></button><button aria-label="偏移"><svg><use href="#offset"/></svg></button><button aria-label="阵列"><svg><use href="#array"/></svg></button><button aria-label="移动"><svg><use href="#move"/></svg></button><button aria-label="旋转"><svg><use href="#rotate"/></svg></button><button aria-label="缩放"><svg><use href="#scale"/></svg></button><button aria-label="拉伸"><svg><use href="#stretch"/></svg></button><button aria-label="修剪"><svg><use href="#trim"/></svg></button><button aria-label="延伸"><svg><use href="#extend"/></svg></button><button aria-label="打断于点"><svg><use href="#breakpt"/></svg></button><button aria-label="打断"><svg><use href="#break"/></svg></button><button aria-label="倒角"><svg><use href="#chamfer"/></svg></button><button aria-label="圆角"><svg><use href="#fillet"/></svg></button><button aria-label="分解"><svg><use href="#explode"/></svg></button></div>
    </div>
    <div class="docs"><span class="docnav"><button aria-label="上一文档"><i class="tri lt"></i></button><button aria-label="下一文档"><i class="tri rt"></i></button></span><button class="doctab"><svg viewBox="0 0 60 12" preserveAspectRatio="none" aria-hidden="true"><path d="M0 0l6 11h48l6-11"/></svg><b>Drawing1.dwg</b></button></div>
    <div class="command">
      <div class="cmds"><output>命令:</output><div class="cmdline"><label for="cmd">命令:</label><input id="cmd" type="text"><span class="cmdscroll" aria-hidden="true"><span class="tri lt"></span><span class="knob"></span><span class="tri rt"></span></span></div></div>
      <div class="spin" aria-hidden="true"><span class="tri up"></span><span class="tri down"></span></div>
    </div>
  </section>

  <aside class="side">
    <button class="x" aria-label="关闭屏幕菜单"><svg class="i6"><use href="#cross"/></svg></button>
    <div class="sidebody">
      <div class="vbar far"><button aria-label="地图"><svg><use href="#maps"/></svg></button><button aria-label="缩放"><svg><use href="#zoomgray"/></svg></button><button aria-label="全部缩放"><svg class="faint"><use href="#four"/></svg></button><button aria-label="窗口放大"><svg><use href="#zoomgray"/></svg></button><button aria-label="缩小"><svg><use href="#zoomgray"/></svg></button><button aria-label="返回"><svg class="faint"><use href="#ellarc"/></svg></button><button aria-label="节点"><svg><use href="#four"/></svg></button><button aria-label="编辑"><svg><use href="#eraser"/></svg></button><button aria-label="数据库"><svg><use href="#db"/></svg></button><button aria-label="工具"><svg><use href="#tool"/></svg></button><button aria-label="面板"><svg><use href="#panel"/></svg></button><button aria-label="信息"><svg><use href="#info"/></svg></button><button class="pressed" aria-label="关闭"><svg><use href="#redx"/></svg></button></div>
      <div class="screen">
        <button>坐标定位</button><button>文字注记</button>
        <div class="items"><button>分类注记</button><button>通用注记</button><button>变换字体</button><button>定义字型</button><button>特殊注记</button><button>常用文字</button></div>
        <button>控制点</button><button>水系设施</button><button>居民地</button><button>独立地物</button><button>交通设施</button><button>管线设施</button><button>境界线</button><button>地貌土质</button><button>植被土质</button><button>市政部件</button>
      </div>
    </div>
  </aside>
</main>

<footer class="status">
  <span class="soft">飞时达土方计算软件</span><span class="coords">204.149044, 53.828739, 0.000000</span>
  <div class="modes"><button>捕捉</button><button>栅格</button><button>正交</button><button>极轴</button><button class="on">对象捕捉</button><button class="on">对象追踪</button><button class="on mono">DUCS</button><button class="on mono">DYN</button><button class="on">线宽</button><button class="on">模型</button></div>
  <div class="anno"><span>注释比例:</span><button>1:1</button><button class="caret" aria-label="比例列表"></button><button aria-label="注释可见性"><svg><use href="#brush"/></svg></button><button aria-label="自动添加比例"><svg class="faint"><use href="#brush"/></svg></button><button aria-label="锁定"><svg><use href="#padlock"/></svg></button><button class="caret" aria-label="状态栏菜单"></button><button aria-label="全屏"><svg><use href="#save"/></svg></button></div>
</footer>

<footer class="taskbar">
  <button class="start" aria-label="开始"><svg><use href="#orb"/></svg></button>
  <button class="pin" aria-label="显示桌面"><svg><use href="#desktop"/></svg></button>
  <button class="task active"><svg><use href="#acad"/></svg><span>南方CASS9.2 - [...</span></button>
  <button class="task"><svg><use href="#photo"/></svg><span>-d9238929fd18e...</span></button>
  <div class="tray"><span class="traydots" aria-hidden="true"><i></i><i class="ring"></i><i class="gn"></i><i class="rd"></i><i></i><i></i><i></i></span><time datetime="2022-01-10">2022/1/10</time></div>
  <p class="contact">QQ2群225430616；个人QQ1395009890</p>
</footer>
</body>
</html>
```

FILE: styles.css
```css
* { box-sizing: border-box; }
html, body { height: 100%; }
body {
  margin: 0;
  display: flex;
  flex-direction: column;
  overflow: hidden;
  background: #f3eef4;
  color: #25232b;
  font: 8px/12px "Open Sans", "Noto Sans CJK SC", sans-serif;
}
.sprite { position: absolute; width: 0; height: 0; }
button, input, select {
  margin: 0;
  padding: 0;
  border: 0;
  border-radius: 0;
  background: none;
  color: inherit;
  font: inherit;
  white-space: nowrap;
}
button { display: inline-flex; align-items: center; justify-content: center; }
select { appearance: none; }
h1, h2, p { margin: 0; font: inherit; }
svg { display: block; flex: none; width: 13px; height: 13px; }
.i10 { width: 10px; height: 10px; }
.i12 { width: 12px; height: 12px; }
svg.i6, .menuright svg.i6 { width: 5px; height: 5px; }
.faint { opacity: .35; }

.tri { display: block; width: 0; height: 0; border: 2px solid transparent; flex: none; }
.tri.up { border-top: 0; border-bottom: 3px solid #333; }
.tri.down { border-bottom: 0; border-top: 3px solid #333; }
.tri.lt { border-left: 0; border-right: 3px solid #222; }
.tri.rt { border-right: 0; border-left: 3px solid #222; }
.knob { display: block; width: 10px; height: 9px; border: 1px solid #9a979d; border-radius: 1px; background: #dcd8de; }
.caret::after, .pick::after, .layerbox::after {
  content: "";
  border: 2px solid transparent;
  border-top: 3px solid #111;
  border-bottom: 0;
}
.caret.dim::after { border-top-color: #aaa6b0; }

.titlebar {
  flex: none;
  height: 13px;
  display: flex;
  align-items: center;
  gap: 3px;
  padding-left: 1px;
  background: linear-gradient(90deg, #c9d7df 0, #b4cbd8 12%, #9dbfd0 17%, #28858a 19%, #36888e 21%, #a7cce0 24%, #81b5dd 37%, #a3cbe5 40%, #3f4581 43%, #3d3a78 56%, #7d8ab1 59%, #81776f 66%, #65788f 71%, #2e6ba7 74%, #4481b5 83%, #1c4e80 87%, #5c8ab2 94%, #9fb6cd 100%);
}
.titlebar h1 { flex: 1; font-size: 9px; }
.winbtns { display: flex; align-self: flex-start; }
.winbtns button { width: 17px; height: 9px; border: 1px solid #44617f; border-top: 0; background: linear-gradient(#b7c9da, #6f8eab); color: #fff; }
.winbtns .close { width: 29px; background: linear-gradient(#df8a79, #c33b22); border-radius: 0 0 3px 0; }
.winbtns svg { width: 7px; height: 6px; }
.g-min { width: 7px; height: 2px; background: #fff; }
.g-max { width: 6px; height: 5px; border: 1px solid #fff; }

.menubar { flex: none; height: 14px; display: flex; align-items: center; padding-left: 4px; background: #e6e5f5; border-top: 1px solid #f8f7fb; border-bottom: 1px solid #bcb8c4; }
.menus { flex: 1; display: flex; gap: 8px; padding-left: 3px; }
.search { width: 174px; height: 12px; background: #f7f5fa; padding-left: 2px; border-right: 1px solid #999; }
.search::placeholder { color: #686572; opacity: 1; }
.menuright { display: flex; width: 74px; height: 12px; }
.menuright button { flex: 1; border-right: 1px solid #b9b7c9; background: #f1eff7; color: #456; }
.menuright .caret { flex: none; width: 6px; }
.menuright svg { width: 9px; height: 9px; }
.m-min { width: 4px; height: 1px; background: #456; }
.m-max { width: 5px; height: 5px; border: 1px solid #6b7d92; }

.toolbar { flex: none; display: grid; height: 17px; padding-left: 7px; border-bottom: 1px solid #c4c0c8; justify-content: start; }
.tb1 { grid-template-columns: 17px 20px 41px 195px 18px 32px 93px 47px 36px 75px 17px 219px; }
.tb2 { height: 18px; border-bottom-color: #a29fa7; grid-template-columns: 251px 55px 49px 48px 45px 49px 94px 130px; }
.group { display: flex; align-items: center; padding: 0 1px; border-right: 1px solid #b4b0ba; min-width: 0; }
.group > button { flex: 1 1 0; min-width: 0; height: 15px; }
.group > .caret { flex: 0 0 7px; }
.pl8 { padding-left: 8px; }
.pl10 { padding-left: 10px; }
.layerbox { background: #fff; margin: 1px 1px 1px 4px; padding: 0 5px 0 3px; border-right: 0; box-shadow: 3px 0 0 #f3eef4, 4px 0 0 #b4b0ba; }
.layerbox svg { width: 11px; height: 11px; }
.layerbox select { flex: 1; padding-left: 2px; }
.redtext { padding-left: 12px; color: #d32f25; font-size: 11px; }
.redtext .nar { font: 8px/12px "Liberation Sans", sans-serif; }
.pick { display: flex; align-items: center; background: #fff; height: 13px; padding-right: 4px; }
.pick select { flex: 1; min-width: 0; padding-left: 2px; }
.dimsel .pick { flex: 1; }
.dimsel > button { flex: 0 0 18px; }

.main { flex: 1; min-height: 0; display: grid; grid-template-columns: 190px minmax(0, 1fr) 56px; }

.props { display: grid; grid-template-columns: 7px minmax(0, 1fr); min-width: 0; min-height: 0; overflow: hidden; }
.scroller { display: flex; flex-direction: column; align-items: center; margin: 40px 0 38px; background: #d7d2d9; }
.scroller .track { width: 100%; flex: 50 1 0; background: #fff; }
.scroller .track.end { flex-grow: 26; }
.scroller .thumb { width: 100%; flex: 220 1 0; background: #9d999f; }
.panel { display: flex; flex-direction: column; padding: 2px 11px 0 6px; min-width: 0; min-height: 0; }
.x { align-self: flex-end; width: 7px; height: 8px; background: #c9c5cd; border: 1px solid #77737b; }
.objrow { display: flex; gap: 4px; margin: 6px 0 8px; }
.objrow .pick { flex: 1; min-width: 0; height: 14px; }
.objbtns { display: flex; border: 1px solid #c2bec6; }
.objbtns button { width: 14px; border-right: 1px solid #c2bec6; }
.objbtns svg { width: 12px; height: 12px; }
.panel table { width: calc(100% - 8px); margin-left: 8px; border-collapse: collapse; table-layout: fixed; }
.panel tr { height: 16px; }
.panel th, .panel td { padding: 0 0 0 2px; border: 1px solid #b7b2bb; font-weight: 400; text-align: left; line-height: 12px; white-space: nowrap; }
.panel th { width: 65px; padding-left: 3px; background: #ece7ed; }
.panel td { background: #fff; }
.panel .ro td { background: #f0ebf1; }
.panel .sel th { background: #087be0; color: #fff; }
.lw { display: inline-block; width: 39px; height: 1px; margin: 0 4px 3px 2px; background: #333; vertical-align: middle; }
.edit { display: flex; align-items: center; }
.edit input { flex: 1; min-width: 0; }
.edit button svg { width: 12px; height: 14px; }
.panel h2 { display: flex; flex: none; align-items: center; justify-content: space-between; height: 15px; margin-top: 7px; padding: 0 1px 0 4px; border-radius: 3px 3px 0 0; background: linear-gradient(90deg, #908c92, #aca8ae); font-weight: 700; }
.panel h2.cut { height: 10px; overflow: hidden; align-items: flex-start; line-height: 10px; }
.panel h2.cut svg { height: 10px; }
.desc { flex: 1; min-height: 28px; margin: 5px 0 8px; padding: 1px; border: 1px solid #bbb6be; line-height: 11px; white-space: normal; }

.work { display: flex; flex-direction: column; min-width: 0; min-height: 0; border-left: 1px solid #74717a; padding-left: 2px; }
.tft { flex: none; height: 20px; display: flex; align-items: center; gap: 6px; padding-left: 5px; border-left: 1px solid #aaa6ae; }
.middle { flex: 1; min-height: 0; display: grid; grid-template-columns: 15px 1fr 21px; border-bottom: 1px solid #69666d; }
.vbar { display: flex; flex-direction: column; align-items: center; padding-top: 6px; }
.vbar.left { align-items: flex-start; }
.vbar button { flex: none; width: 13px; height: 14px; }
.vbar svg { width: 12px; height: 12px; }
.vbar.left svg { width: 11px; height: 11px; }
.vbar .red { color: #d8362a; font-size: 11px; }
.vbar .red.small { font-size: 8px; font-weight: 700; }
.vbar .last { height: 17px; border-bottom: 1px solid #b2aeb6; }
.vbar.far { padding-top: 12px; }
.vbar .pressed { background: #c6c1c9; }
.view { display: grid; grid-template-columns: 1fr 11px; grid-template-rows: 1fr 12px; min-width: 0; min-height: 0; }
.canvas { width: 100%; height: 100%; min-height: 0; background: #000; overflow: hidden; }
.elev { fill: #fb2b24; font: bold 11px "Liberation Sans", sans-serif; }
.pl { fill: none; stroke: #d8d8d8; stroke-width: 1px; }
.green { fill: #47bd28; }
.grips { fill: #2b5ed6; }
.vscroll { display: flex; flex-direction: column; align-items: center; padding: 5px 0; gap: 4px; background: #f7f3f8; }
.vscroll .tri.down { margin-top: auto; }
.layouts { grid-column: 1 / -1; display: flex; min-width: 0; }
.nav { display: flex; padding-right: 1px; }
.nav button { width: 9px; border-right: 1px solid #b8b4bc; }
.bar { width: 1px; height: 5px; background: #444; }
.tab { height: 10px; padding: 0 5px; font: 8px/9px "Liberation Serif", "Noto Sans CJK SC", serif; }
.tab.on { background: #000; color: #fff; clip-path: polygon(0 0, 100% 0, 86% 100%, 14% 100%); }
.tab.sheet { display: grid; padding: 0; }
.sheet svg { grid-area: 1 / 1; width: 38px; height: 10px; fill: none; stroke: #333; }
.sheet span { grid-area: 1 / 1; justify-self: start; padding-left: 4px; }
.hscroll { display: flex; align-items: center; justify-content: space-between; width: 203px; margin-left: auto; padding: 0 15px 0 5px; border-left: 1px solid #bbb; }
.docs { flex: none; height: 15px; display: flex; align-items: flex-start; padding: 1px 0 0 14px; border-bottom: 1px solid #69666d; }
.docnav { display: flex; }
.docnav button { width: 12px; height: 11px; border: 1px solid #625f66; background: #f8f5f9; }
.doctab { display: grid; height: 11px; }
.doctab svg { grid-area: 1 / 1; width: 62px; height: 11px; fill: #fff; stroke: #333; }
.doctab b { grid-area: 1 / 1; font: bold 7px/10px "Liberation Sans", sans-serif; }
.command { flex: none; display: grid; grid-template-columns: 1fr 9px; height: 36px; padding: 6px 4px 0 8px; }
.cmds { display: grid; grid-template-rows: 1fr 1fr; background: #fff; border: 1px solid #7c7980; border-right: 0; font: 9px/12px "Liberation Mono", "Noto Sans CJK SC", monospace; }
.cmds > * { padding-left: 1px; }
.cmdline { display: flex; align-items: center; border-top: 1px solid #aaa7ae; }
.cmdline input { flex: 1; }
.cmdscroll { display: flex; align-items: center; align-self: stretch; gap: 4px; width: 49px; padding-left: 5px; background: #f3eff4; }
.cmdscroll .tri.rt { margin-left: auto; margin-right: 6px; }
.spin { display: flex; flex-direction: column; align-items: center; gap: 4px; height: 16px; padding-top: 4px; border: 1px solid #ccc8d0; border-left: 0; }

.side { display: flex; flex-direction: column; min-height: 0; border-left: 1px solid #74717a; }
.side .x { margin: 2px 0 2px; }
.sidebody { flex: 1; min-height: 0; display: grid; grid-template-columns: 15px 1fr; }
.screen { display: flex; flex-direction: column; min-height: 0; padding-bottom: 4px; }
.screen > button { flex: none; height: 13px; border: 1px solid #5e5b65; background: #faf7fb; }
.screen > button + button { border-top: 0; }
.screen .items { flex: 1; display: flex; flex-direction: column; padding-top: 4px; background: #6070a2; color: #e9ebf6; border-bottom: 1px solid #444; }
.items button { height: 16px; }

.status { flex: none; height: 14px; display: flex; align-items: center; padding-left: 4px; border-top: 1px solid #b8b4bb; }
.soft { width: 73px; white-space: nowrap; }
.coords { width: 151px; height: 12px; border: 1px solid #aaa5ae; border-right-color: #fff; border-bottom-color: #fff; font: 7px/11px "Liberation Mono", monospace; white-space: nowrap; }
.modes { display: flex; gap: 2px; padding-left: 2px; }
.modes button { height: 12px; padding: 0 1px; border-right: 1px solid #aaa6ae; }
.modes .on { padding: 0; border: 1px solid #77737b; border-right-color: #bbb; border-bottom-color: #ccc; background: #ece7ed; }
.modes .mono { font: 7px/10px "Liberation Mono", monospace; }
.anno { display: flex; align-items: center; margin-left: auto; gap: 2px; }
.anno svg { width: 12px; height: 12px; }
.anno > span { margin-right: 3px; }
.anno .caret { width: 10px; }

.taskbar { flex: none; position: relative; height: 24px; display: flex; align-items: center; background: linear-gradient(90deg, #27344d 0, #313d5d 16%, #36414f 30%, #355c76 34%, #2c5c7c 50%, #3c6570 58%, #17213e 67%, #28233e 74%, #2e5165 82%, #284c5c 100%); color: #fff; }
.start { width: 34px; }
.start svg { width: 22px; height: 22px; }
.pin { width: 44px; }
.pin svg { width: 18px; height: 18px; }
.task { width: 101px; height: 23px; margin-right: 4px; justify-content: flex-start; gap: 4px; padding-left: 5px; border: 1px solid #7a8495; border-radius: 2px; background: linear-gradient(#667086, #3a4760); color: #eef; }
.task.active { background: linear-gradient(#a4abbc, #707991); }
.task svg { width: 18px; height: 18px; }
.tray { margin-left: auto; align-self: stretch; width: 156px; padding-right: 11px; display: flex; flex-direction: column; justify-content: flex-end; }
.traydots { display: flex; gap: 10px; height: 5px; }
.traydots i { width: 5px; height: 5px; background: #c9d5de; border-radius: 1px; }
.traydots .ring { background: none; border: 1px solid #dde; border-radius: 50%; }
.traydots .gn { background: #79c93a; }
.traydots .rd { background: #e6b9a6; }
.tray time { text-align: right; line-height: 10px; }
.contact { position: absolute; right: 5px; bottom: 9px; color: #f4301f; font: 19px/20px "Noto Sans", "Noto Sans CJK SC", sans-serif; white-space: nowrap; text-shadow: 1px 0 #6d1412, -1px 0 #4a0e10, 0 1px #4a0e10, 0 -1px #4a0e10, 1px 1px 2px #000; }
```
